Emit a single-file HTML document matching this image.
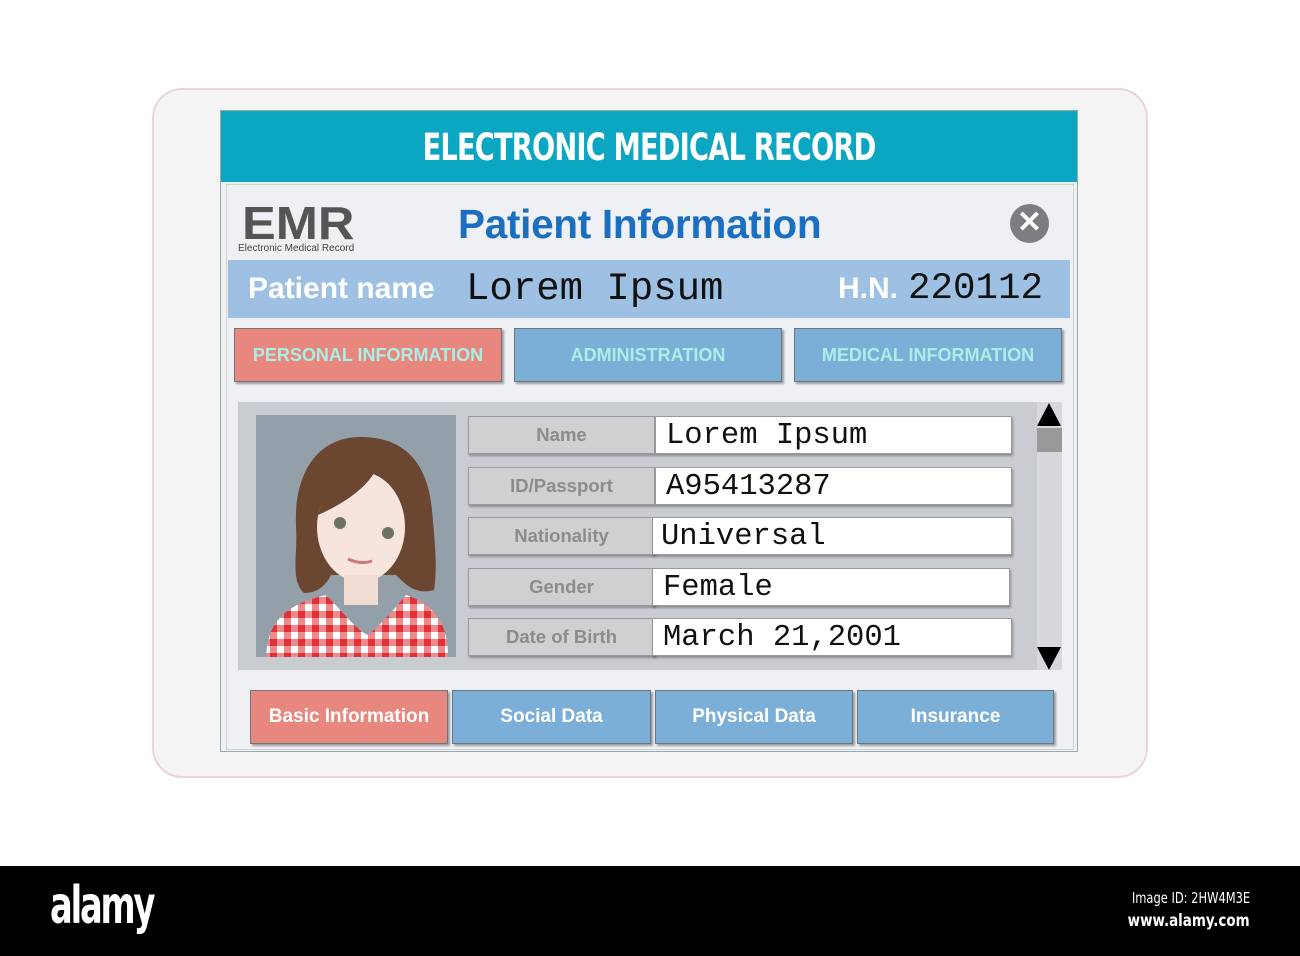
<!DOCTYPE html>
<html><head><meta charset="utf-8"><style>
*{margin:0;padding:0;box-sizing:border-box}
body{width:1300px;height:956px;background:#fff;position:relative;overflow:hidden;font-family:"Liberation Sans",sans-serif}
.a{position:absolute;white-space:nowrap}
.tab{position:absolute;display:flex;align-items:center;justify-content:center;font-weight:bold;border:1px solid #6d7680;box-shadow:2px 2px 2px rgba(0,0,0,.35);white-space:nowrap}
.lbl{position:absolute;left:468px;width:187px;height:38px;background:#cfd0d2;border:1px solid #9a9a9a;box-shadow:1px 2px 2px rgba(0,0,0,.3);color:#8c8c8c;font-weight:bold;font-size:18.5px;display:flex;align-items:center;justify-content:center}
.val{position:absolute;left:655px;width:357px;height:38px;background:#fff;border:1px solid #9a9a9a;box-shadow:1px 2px 2px rgba(0,0,0,.3);font-family:"Liberation Mono",monospace;font-size:30.5px;color:#111;padding-left:10px;line-height:38px}
</style></head><body>
<div class="a" style="left:152px;top:88px;width:996px;height:690px;border-radius:30px;background:#f4f4f5;border:2px solid #ecd3d8"></div>
<div class="a" style="left:220px;top:110px;width:858px;height:642px;background:#eef0f4;border:1px solid #9aa"></div>
<div class="a" style="left:221px;top:111px;width:856px;height:71px;background:#0aa6c2"></div>
<div class="a" style="left:221px;top:111px;width:856px;height:71px;color:#fff;font-family:'DejaVu Sans Condensed',sans-serif;font-weight:bold;font-size:37px;text-align:center;line-height:74px;letter-spacing:-1px;transform:scaleX(0.82)">ELECTRONIC MEDICAL RECORD</div>
<div class="a" style="left:226px;top:184px;width:848px;height:566px;border:1px solid #d0d3d8"></div>
<div class="a" style="left:242px;top:196px;font-size:46px;font-weight:bold;color:#555;transform:scaleX(1.1);transform-origin:left">EMR</div>
<div class="a" style="left:238px;top:243px;font-size:10px;color:#444">Electronic Medical Record</div>
<div class="a" style="left:458px;top:201px;font-size:40.5px;font-weight:bold;color:#1a6fc0;letter-spacing:-0.3px">Patient Information</div>
<div class="a" style="left:1010px;top:204px;width:39px;height:39px;border-radius:50%;background:#7c7d80;color:#fff;text-align:center;line-height:38px;font-size:30px;font-weight:bold">✕</div>
<div class="a" style="left:228px;top:260px;width:842px;height:58px;background:#9dc0e3"></div>
<div class="a" style="left:248px;top:272px;font-size:30px;font-weight:bold;color:#fff">Patient name</div>
<div class="a" style="left:466px;top:267px;font-family:'Liberation Mono',monospace;font-size:39px;color:#111">Lorem Ipsum</div>
<div class="a" style="left:838px;top:272px;font-size:30px;font-weight:bold;color:#fff">H.N.</div>
<div class="a" style="left:908px;top:268px;font-family:'Liberation Mono',monospace;font-size:37.5px;color:#111">220112</div>
<div class="tab" style="left:234px;top:328px;width:268px;height:54px;background:#e8877e;color:#a8f0e6;font-size:18px">PERSONAL INFORMATION</div>
<div class="tab" style="left:514px;top:328px;width:268px;height:54px;background:#7bafd8;color:#a8f0e6;font-size:18px">ADMINISTRATION</div>
<div class="tab" style="left:794px;top:328px;width:268px;height:54px;background:#7bafd8;color:#a8f0e6;font-size:18px">MEDICAL INFORMATION</div>
<div class="a" style="left:238px;top:402px;width:824px;height:268px;background:#c9ccd1"></div>
<div class="a" style="left:1037px;top:402px;width:25px;height:268px;background:#d6d8db"></div>
<div class="a" style="left:1037px;top:403px;width:0;height:0;border-left:12px solid transparent;border-right:12px solid transparent;border-bottom:23px solid #000"></div>
<div class="a" style="left:1037px;top:428px;width:25px;height:24px;background:#999"></div>
<div class="a" style="left:1037px;top:647px;width:0;height:0;border-left:12px solid transparent;border-right:12px solid transparent;border-top:23px solid #000"></div>
<svg class="a" style="left:256px;top:415px" width="200" height="242" viewBox="0 0 200 242">
<defs><pattern id="g" width="14" height="14" patternUnits="userSpaceOnUse"><rect width="14" height="14" fill="#fff"/><rect width="7" height="14" fill="#f08a8a"/><rect width="14" height="7" fill="#f08a8a"/><rect width="7" height="7" fill="#e0303a"/></pattern></defs>
<rect width="200" height="242" fill="#939fa9"/>
<path d="M105 22C60 22 38 60 40 110 42 140 34 165 48 178 62 178 70 170 75 160L140 160C150 170 160 180 178 175 182 150 178 120 176 95 172 50 150 22 105 22Z" fill="#6b4630"/>
<ellipse cx="105" cy="112" rx="44" ry="55" fill="#f6e4dd"/>
<path d="M62 100C70 60 100 45 130 52 150 60 160 80 162 110 150 80 130 65 118 58 108 75 85 90 62 100Z" fill="#6b4630"/>
<rect x="88" y="160" width="34" height="30" fill="#f0dcd3"/>
<path d="M10 242C12 205 30 190 70 180 90 200 100 215 112 220 125 210 140 192 150 180 180 190 192 210 192 242Z" fill="url(#g)"/>
<circle cx="84" cy="108" r="6" fill="#6f7062"/><circle cx="132" cy="118" r="6" fill="#6f7062"/>
<path d="M92 144Q105 150 116 146" stroke="#d07878" stroke-width="3" fill="none"/>
</svg>
<div class="lbl" style="top:416px">Name</div><div class="val" style="top:416px">Lorem Ipsum</div>
<div class="lbl" style="top:467px">ID/Passport</div><div class="val" style="top:467px">A95413287</div>
<div class="lbl" style="top:517px">Nationality</div><div class="val" style="top:517px;left:652px;width:360px;padding-left:8px">Universal</div>
<div class="lbl" style="top:568px">Gender</div><div class="val" style="top:568px;left:652px;width:358px">Female</div>
<div class="lbl" style="top:618px">Date of Birth</div><div class="val" style="top:618px;left:652px;width:360px">March 21,2001</div>
<div class="tab" style="left:250px;top:690px;width:198px;height:54px;background:#e8877e;color:#fff;font-size:19px">Basic Information</div>
<div class="tab" style="left:452px;top:690px;width:199px;height:54px;background:#7bafd8;color:#fff;font-size:19px">Social Data</div>
<div class="tab" style="left:655px;top:690px;width:198px;height:54px;background:#7bafd8;color:#fff;font-size:19px">Physical Data</div>
<div class="tab" style="left:857px;top:690px;width:197px;height:54px;background:#7bafd8;color:#fff;font-size:19px">Insurance</div>
<div class="a" style="left:0;top:866px;width:1300px;height:90px;background:#000"></div>
<div class="a" style="left:50px;top:876px;font-family:'DejaVu Sans Condensed',sans-serif;font-weight:bold;font-size:52px;color:#fff;letter-spacing:-3px;transform:scaleX(0.72);transform-origin:left">alamy</div>
<div class="a" style="right:50px;top:889px;font-family:'DejaVu Sans Condensed',sans-serif;font-size:15px;color:#fff;transform:scaleX(0.85);transform-origin:right">Image ID: 2HW4M3E</div>
<div class="a" style="right:50px;top:911px;font-family:'DejaVu Sans Condensed',sans-serif;font-size:17px;font-weight:bold;color:#fff;transform:scaleX(0.88);transform-origin:right">www.alamy.com</div>
</body></html>
